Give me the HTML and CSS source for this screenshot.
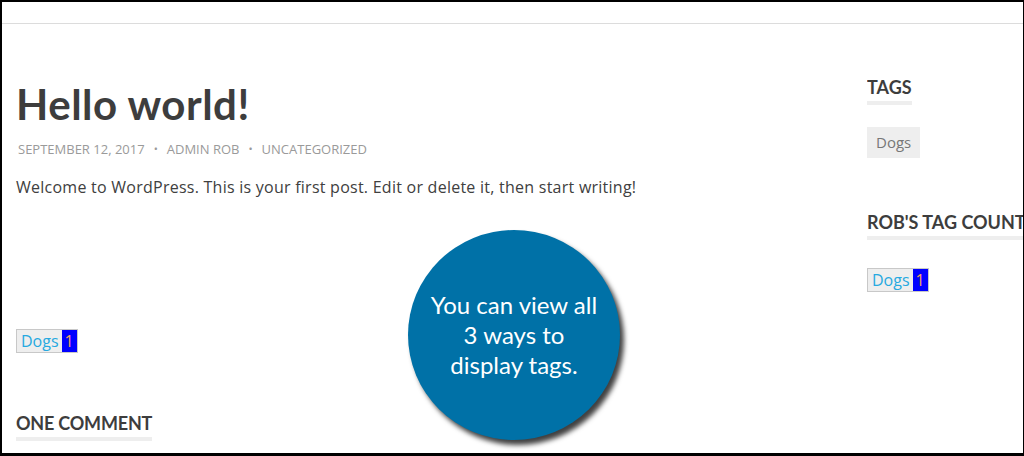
FILE: index.html
```html
<!DOCTYPE html>
<html>
<head>
<meta charset="utf-8">
<link rel="stylesheet" href="styles.css">
</head>
<body>
<div class="frame">
  <div class="topbar"></div>
  <div class="layout">
    <main class="main">
      <h1 class="title">Hello world!</h1>
      <div class="meta"><span>September 12, 2017</span><span class="dot">&bull;</span><span>Admin Rob</span><span class="dot">&bull;</span><span>Uncategorized</span></div>
      <p class="content">Welcome to WordPress. This is your first post. Edit or delete it, then start writing!</p>
      <div class="tagcount main-tag"><span class="tname">Dogs</span><span class="tnum">1</span></div>
      <h3 class="section-title">One Comment</h3>
    </main>
    <aside class="sidebar">
      <h3 class="widget-title">Tags</h3>
      <div class="cloud"><span class="cloud-tag">Dogs</span></div>
      <h3 class="widget-title wide">Rob's Tag Count</h3>
      <div class="tagcount side-tag"><span class="tname">Dogs</span><span class="tnum">1</span></div>
    </aside>
  </div>
  <div class="callout"><p>You can view all<br>3 ways to<br>display tags.</p></div>
</div>
</body>
</html>
```
FILE: styles.css
```css
* { box-sizing: border-box; }
html, body { margin: 0; padding: 0; }
body { width: 1024px; height: 456px; overflow: hidden; background: #000; }
.frame {
  position: relative;
  margin: 2px 1px 3px 2px;
  height: 451px;
  background: #fff;
  overflow: hidden;
}
.topbar { height: 22px; border-bottom: 1px solid #dcdcdc; }
.layout { display: flex; }
.main {
  flex: none;
  width: 865px;
  padding-left: 14px;
  display: flex;
  flex-direction: column;
  align-items: flex-start;
}
.sidebar {
  flex: 1;
  min-width: 0;
  overflow: hidden;
  padding-top: 52px;
  white-space: nowrap;
  display: flex;
  flex-direction: column;
  align-items: flex-start;
}
.title {
  margin: 54px 0 0;
  font-family: Lato, "Liberation Sans", sans-serif;
  font-weight: 700;
  font-size: 42px;
  letter-spacing: 0.5px;
  line-height: 52px;
  color: #3d3d3d;
}
.meta {
  margin-top: 10px;
  font-family: "Open Sans", sans-serif;
  font-size: 13px;
  line-height: 18px;
  text-transform: uppercase;
  color: #9a9a9a;
  display: flex;
  padding-left: 2px;
}
.dot { padding: 0 9px; font-size: 11px; }
.content {
  margin: 18px 0 0;
  font-family: "Open Sans", sans-serif;
  font-size: 16px;
  letter-spacing: 0.25px;
  line-height: 22px;
  color: #404040;
}
.tagcount {
  display: inline-flex;
  border: 1px solid #c8c8c8;
  background: #eeeeee;
  font-family: "Open Sans", sans-serif;
  font-size: 16px;
  line-height: 22px;
}
.tname { color: #26a9e0; padding: 0 3px 0 4px; }
.tnum { background: #0000ff; color: #f2a65a; padding: 0 3px; }
.main-tag { margin-top: 131px; }
.section-title {
  margin: 59px 0 0;
  font-family: Lato, sans-serif;
  font-weight: 700;
  font-size: 18px;
  letter-spacing: -0.2px;
  line-height: 22px;
  text-transform: uppercase;
  color: #3d3d3d;
  display: inline-block;
  border-bottom: 4px solid #eeeeee;
  padding-bottom: 3px;
}
.widget-title {
  margin: 0;
  font-family: Lato, sans-serif;
  font-weight: 700;
  font-size: 18px;
  line-height: 22px;
  text-transform: uppercase;
  color: #3d3d3d;
  border-bottom: 4px solid #eeeeee;
  padding-bottom: 3px;
}
.widget-title.wide { margin-top: 53px; padding-right: 40px; }
.cloud { margin-top: 22px; }
.cloud-tag {
  display: inline-block;
  background: #eeeeee;
  color: #777;
  font-family: "Open Sans", sans-serif;
  font-size: 15px;
  line-height: 31px;
  padding: 0 9px;
}
.side-tag { margin-top: 28px; }
.callout {
  position: absolute;
  left: 406px;
  top: 228px;
  width: 212px;
  height: 210px;
  border-radius: 50%;
  background: #0071a7;
  box-shadow: 4px 5px 5px rgba(0,0,0,0.75);
  display: flex;
  align-items: center;
  justify-content: center;
}
.callout p {
  margin: 0;
  text-align: center;
  color: #fff;
  font-family: Lato, "Open Sans", sans-serif;
  font-size: 24px;
  line-height: 30px;
}
```
